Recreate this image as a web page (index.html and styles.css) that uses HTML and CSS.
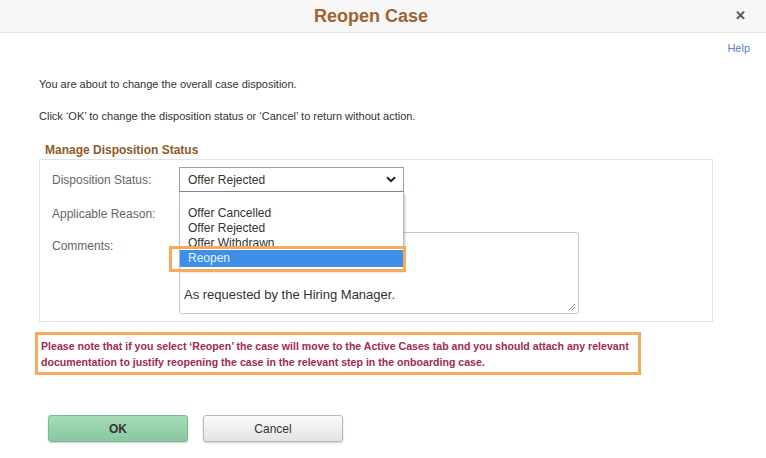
FILE: index.html
```html
<!DOCTYPE html>
<html lang="en">
<head>
<meta charset="UTF-8">
<meta name="viewport" content="width=device-width, initial-scale=1.0">
<title>Reopen Case</title>
<link rel="stylesheet" href="styles.css">
</head>
<body>
<div class="modal">
    <div class="modal-header">
        <h1 class="title">Reopen Case</h1>
        <span class="close">&#x2715;</span>
    </div>
    <div class="help-row"><a class="help" href="#">Help</a></div>
    <div class="content">
        <p class="intro">You are about to change the overall case disposition.</p>
        <p class="intro">Click ‘OK’ to change the disposition status or ‘Cancel’ to return without action.</p>
        <div class="section-title">Manage Disposition Status</div>
        <div class="group">
            <div class="form-row row-status">
                <label class="label">Disposition Status:</label>
                <div class="field">
                    <div class="select">
                        <span>Offer Rejected</span>
                        <svg class="chevron" width="10" height="7" viewBox="0 0 10 7"><path d="M1 1.2 L5 5.2 L9 1.2" fill="none" stroke="#222" stroke-width="2"/></svg>
                    </div>
                    <ul class="dropdown">
                        <li>Offer Cancelled</li>
                        <li>Offer Rejected</li>
                        <li class="clipped">Offer Withdrawn</li>
                        <li class="selected">Reopen</li>
                    </ul>
                    <div class="highlight"></div>
                </div>
            </div>
            <div class="form-row row-reason">
                <label class="label">Applicable Reason:</label>
                <div class="field"></div>
            </div>
            <div class="form-row row-comments">
                <label class="label">Comments:</label>
                <div class="field">
                    <div class="textarea">
                        <span>As requested by the Hiring Manager.</span>
                        <svg class="grip" width="9" height="9" viewBox="0 0 9 9"><path d="M8 2 L2 8 M8 5 L5 8" stroke="#999" stroke-width="1"/></svg>
                    </div>
                </div>
            </div>
        </div>
        <div class="note">
            Please note that if you select ‘Reopen’ the case will move to the Active Cases tab and you should attach any relevant documentation to justify reopening the case in the relevant step in the onboarding case.
        </div>
        <div class="actions">
            <button class="btn btn-ok">OK</button>
            <button class="btn btn-cancel">Cancel</button>
        </div>
    </div>
</div>
</body>
</html>
```
FILE: styles.css
```css
body {
    margin: 0;
    background: #fff;
    font-family: "Liberation Sans", Arial, sans-serif;
    color: #333;
}
.modal {
    width: 766px;
    height: 458px;
    overflow: hidden;
}
.modal-header {
    position: relative;
    height: 32px;
    background: #f6f6f6;
    border-bottom: 1px solid #e2e2e2;
    display: flex;
    align-items: center;
    justify-content: center;
    padding-right: 24px;
}
.title {
    margin: 0;
    font-size: 18px;
    font-weight: bold;
    color: #a0622e;
}
.close {
    position: absolute;
    right: 20px;
    top: 8px;
    font-size: 13px;
    font-weight: bold;
    color: #555;
}
.help-row {
    display: flex;
    justify-content: flex-end;
    padding: 9px 16px 0 0;
    height: 16px;
}
.help {
    font-size: 11px;
    color: #5a80c4;
    text-decoration: none;
}
.content {
    padding-left: 39px;
}
.intro {
    margin: 0;
    padding-top: 20px;
    font-size: 11px;
    line-height: 13px;
    color: #333;
}
.intro + .intro {
    padding-top: 19px;
}
.section-title {
    margin: 20px 0 0 6px;
    font-size: 12px;
    font-weight: bold;
    color: #8e5a2a;
    line-height: 14px;
}
.group {
    width: 674px;
    height: 163px;
    margin-top: 2px;
    border: 1px solid #e2e2e2;
    box-sizing: border-box;
    padding-top: 7px;
}
.form-row {
    display: flex;
}
.label {
    width: 127px;
    padding-left: 12px;
    font-size: 12px;
    color: #666;
    line-height: 26px;
}
.field {
    position: relative;
    flex: none;
}
.row-reason {
    height: 32px;
    margin-top: 7px;
}
.row-reason .label {
    line-height: 12px;
    padding-top: 8px;
}
.row-comments .label {
    line-height: 12px;
    padding-top: 8px;
}
.select {
    width: 225px;
    height: 25px;
    box-sizing: border-box;
    border: 1px solid #9aa0b4;
    border-bottom-color: #7c8296;
    background: #fff;
    display: flex;
    align-items: center;
    justify-content: space-between;
    padding: 0 7px 0 8px;
    font-size: 12px;
    color: #333;
}
.dropdown {
    position: absolute;
    left: 0;
    top: 25px;
    z-index: 2;
    width: 225px;
    height: 78px;
    margin: 0;
    padding: 14px 0 0;
    box-sizing: border-box;
    list-style: none;
    background: #fff;
    border: 1px solid #bbb;
    border-top: none;
    box-shadow: 1px 2px 2px rgba(0, 0, 0, 0.25);
    font-size: 12px;
    line-height: 15px;
    color: #333;
    overflow: hidden;
}
.dropdown li {
    padding-left: 8px;
}
.dropdown .clipped {
    height: 14px;
    overflow: hidden;
}
.dropdown .selected {
    background: #3d8fe8;
    color: #e8f0fc;
    height: 17px;
    line-height: 17px;
}
.highlight {
    position: absolute;
    left: -10px;
    top: 79px;
    z-index: 3;
    width: 237px;
    height: 26px;
    box-sizing: border-box;
    border: 3px solid #f7a95c;
}
.textarea {
    position: relative;
    width: 400px;
    height: 82px;
    box-sizing: border-box;
    border: 1px solid #c8c8c8;
    border-radius: 3px;
    padding: 54px 0 0 4px;
    font-size: 13px;
    color: #333;
}
.grip {
    position: absolute;
    right: 2px;
    bottom: 2px;
}
.note {
    width: 606px;
    margin: 10px 0 0 -4px;
    box-sizing: border-box;
    border: 3px solid #f7a95c;
    padding: 3px 2px 2px 3px;
    font-size: 10.6px;
    font-weight: bold;
    line-height: 16px;
    color: #a3294f;
}
.actions {
    display: flex;
    gap: 15px;
    margin: 40px 0 0 9px;
}
.btn {
    width: 140px;
    height: 27px;
    border-radius: 3px;
    font-family: "Liberation Sans", Arial, sans-serif;
    font-size: 12px;
    color: #333;
    cursor: pointer;
}
.btn-ok {
    border: 1px solid #7fb892;
    background: linear-gradient(#a6dcb8, #87c8a0);
    font-weight: bold;
    box-shadow: 0 1px 2px rgba(0, 0, 0, 0.2);
}
.btn-cancel {
    border: 1px solid #b8b8b8;
    background: linear-gradient(#fafafa, #e4e4e4);
    box-shadow: 0 1px 2px rgba(0, 0, 0, 0.2);
}
```
